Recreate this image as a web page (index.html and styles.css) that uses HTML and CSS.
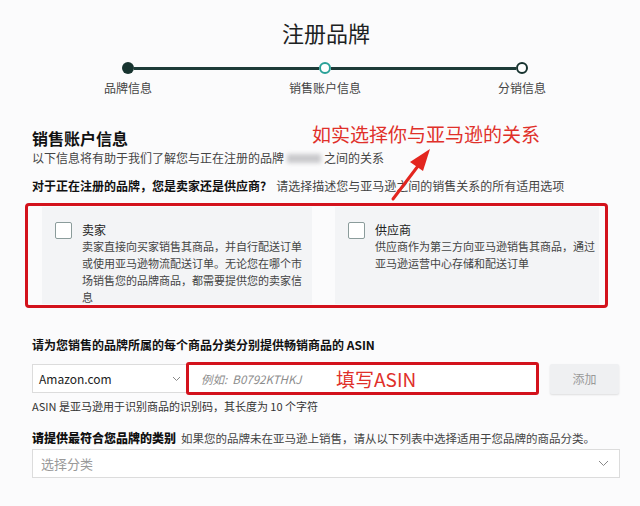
FILE: index.html
```html
<!DOCTYPE html>
<html lang="zh-CN">
<head>
    <meta charset="UTF-8">
    <meta name="viewport" content="width=device-width, initial-scale=1.0">
    <title>注册品牌</title>
    <link rel="stylesheet" href="styles.css">
</head>
<body>
    <div class="page">
        <h1 class="title">注册品牌</h1>

        <div class="steps">
            <span class="dot done"></span>
            <span class="bar"></span>
            <span class="dot current"></span>
            <span class="bar"></span>
            <span class="dot todo"></span>
        </div>
        <div class="step-labels">
            <span>品牌信息</span>
            <span>销售账户信息</span>
            <span>分销信息</span>
        </div>

        <div class="form">
            <h2 class="section-title">销售账户信息</h2>
            <p class="section-sub">以下信息将有助于我们了解您与正在注册的品牌<span class="blurred"></span>之间的关系</p>

            <p class="question"><b>对于正在注册的品牌，您是卖家还是供应商?</b><span class="hint-inline">请选择描述您与亚马逊之间的销售关系的所有适用选项</span></p>

            <div class="mark-box">
                <div class="option">
                    <span class="checkbox"></span>
                    <div class="option-text">
                        <div class="option-title">卖家</div>
                        <div class="option-desc">卖家直接向买家销售其商品，并自行配送订单或使用亚马逊物流配送订单。无论您在哪个市场销售您的品牌商品，都需要提供您的卖家信息</div>
                    </div>
                </div>
                <div class="option">
                    <span class="checkbox"></span>
                    <div class="option-text">
                        <div class="option-title">供应商</div>
                        <div class="option-desc">供应商作为第三方向亚马逊销售其商品，通过亚马逊运营中心存储和配送订单</div>
                    </div>
                </div>
            </div>

            <p class="field-label">请为您销售的品牌所属的每个商品分类分别提供畅销商品的 ASIN</p>
            <div class="asin-row">
                <div class="select market">
                    <span>Amazon.com</span>
                    <svg class="chev" width="9" height="6" viewBox="0 0 9 6"><path d="M1 1l3.5 3.5L8 1" fill="none" stroke="#888" stroke-width="1"/></svg>
                </div>
                <div class="mark-input">
                    <span class="placeholder">例如:&nbsp; B0792KTHKJ</span>
                    <span class="note">填写ASIN</span>
                </div>
                <button class="add-btn">添加</button>
            </div>
            <p class="field-hint">ASIN 是亚马逊用于识别商品的识别码，其长度为 10 个字符</p>

            <p class="field-label cat-label"><b>请提供最符合您品牌的类别</b><span class="cat-hint">如果您的品牌未在亚马逊上销售，请从以下列表中选择适用于您品牌的商品分类。</span></p>
            <div class="select category">
                <span>选择分类</span>
                <svg class="chev" width="11" height="7" viewBox="0 0 11 7"><path d="M1 1l4.5 4.5L10 1" fill="none" stroke="#888" stroke-width="1"/></svg>
            </div>
        </div>

        <!-- annotations drawn on top of the form -->
        <span class="note top-note">如实选择你与亚马逊的关系</span>
        <svg class="arrow" width="640" height="506" viewBox="0 0 640 506">
            <path d="M393 199 L418 166" stroke="#e3261f" stroke-width="3" stroke-linecap="round"/>
            <path d="M430 149 L410 162 L423 171 Z" fill="#e3261f"/>
        </svg>
    </div>
</body>
</html>
```

FILE: styles.css
```css
/* Page */
body {
    margin: 0;
    background-color: #fbfbfc;
    font-family: "Noto Sans CJK SC", "Noto Sans", sans-serif;
    color: #111;
}

.page {
    position: relative;
    width: 640px;
    height: 506px;
    overflow: hidden;
    padding-top: 17px;
    box-sizing: border-box;
}

.title {
    margin: 0;
    padding-left: 12px;
    text-align: center;
    font-size: 22px;
    line-height: 30px;
    font-weight: 400;
    color: #1c2222;
}

/* Progress steps */
.steps {
    display: flex;
    align-items: center;
    margin: 15px 0 0 122px;
    width: 406px;
}

.dot {
    width: 12px;
    height: 12px;
    border-radius: 50%;
    box-sizing: border-box;
    flex: none;
}

.dot.done {
    background-color: #17332f;
}

.dot.current {
    border: 2px solid #2aa198;
    background-color: #fff;
}

.dot.todo {
    border: 2px solid #17332f;
    background-color: #fff;
}

.bar {
    flex: 1;
    height: 3px;
    background-color: #1d3b38;
}

.step-labels {
    display: flex;
    justify-content: space-between;
    margin: 6px 0 0 78px;
    width: 494px;
}

.step-labels span {
    width: 100px;
    text-align: center;
    font-size: 12px;
    line-height: 16px;
    color: #444;
}

/* Form */
.form {
    margin: 0 20px 0 32px;
}

.section-title {
    margin: 31px 0 0;
    font-size: 16px;
    line-height: 22px;
    font-weight: 700;
}

.section-sub {
    margin: 1px 0 0;
    font-size: 12px;
    line-height: 16px;
    color: #444;
}

.blurred {
    display: inline-block;
    width: 34px;
    height: 9px;
    margin: 0 3px;
    background-color: #c9c9cc;
    filter: blur(2px);
}

.question {
    margin: 12px 0 0;
    font-size: 12px;
    line-height: 16px;
}

.hint-inline {
    margin-left: 10px;
    color: #444;
}

/* Red framed option cards */
.mark-box {
    display: flex;
    gap: 23px;
    margin: 9px 12px 0 -7px;
    height: 105px;
    padding: 1px 6px 1px 14px;
    border: 3px solid #d3121c;
    border-radius: 4px;
    box-sizing: border-box;
}

.option {
    flex: 1;
    display: flex;
    gap: 10px;
    padding: 14px 2px 0 13px;
    background-color: #f3f4f6;
}

.option:first-child {
    flex: 0 0 270px;
    box-sizing: border-box;
}

.checkbox {
    flex: none;
    width: 17px;
    height: 17px;
    margin-top: 1px;
    border: 1px solid #8b9c9b;
    border-radius: 2px;
    background-color: #fff;
    box-sizing: border-box;
}

.option-title {
    font-size: 12px;
    line-height: 17px;
    color: #222;
}

.option-desc {
    font-size: 11px;
    line-height: 17px;
    color: #444;
}

/* ASIN row */
.field-label {
    margin: 29px 0 0;
    font-size: 12px;
    line-height: 16px;
    font-weight: 700;
}

.asin-row {
    display: flex;
    align-items: center;
    margin-top: 9px;
    height: 33px;
}

.select {
    display: flex;
    align-items: center;
    justify-content: space-between;
    background-color: #fff;
    border: 1px solid #dcdcdc;
    box-sizing: border-box;
    font-size: 12px;
    color: #222;
}

.select.market {
    width: 154px;
    height: 29px;
    padding: 0 5px 0 6px;
    border-right: none;
}

.mark-input {
    display: flex;
    align-items: center;
    width: 353px;
    height: 33px;
    padding-left: 12px;
    border: 3px solid #d3121c;
    border-radius: 3px;
    box-sizing: border-box;
    background-color: #fff;
}

.placeholder {
    width: 135px;
    font-size: 11.5px;
    font-style: italic;
    color: #8d8d8d;
}

.note {
    font-size: 19px;
    line-height: 24px;
    color: #e0302a;
}

.add-btn {
    margin-left: 11px;
    width: 69px;
    height: 30px;
    border: none;
    border-radius: 2px;
    background-color: #eff0f2;
    box-shadow: 0 1px 2px rgba(0, 0, 0, 0.12);
    font-family: inherit;
    font-size: 12px;
    color: #999;
}

.field-hint {
    margin: 4px 0 0;
    font-size: 11px;
    line-height: 14px;
    color: #333;
}

/* Category */
.cat-label {
    margin-top: 17px;
}

.cat-hint {
    margin-left: 5px;
    font-size: 11.5px;
    font-weight: 400;
    color: #444;
}

.select.category {
    margin-top: 3px;
    height: 29px;
    padding: 0 10px 0 8px;
    font-size: 13px;
    color: #999;
}

/* Annotations */
.top-note {
    position: absolute;
    left: 312px;
    top: 122px;
}

.arrow {
    position: absolute;
    left: 0;
    top: 0;
    pointer-events: none;
}
```
